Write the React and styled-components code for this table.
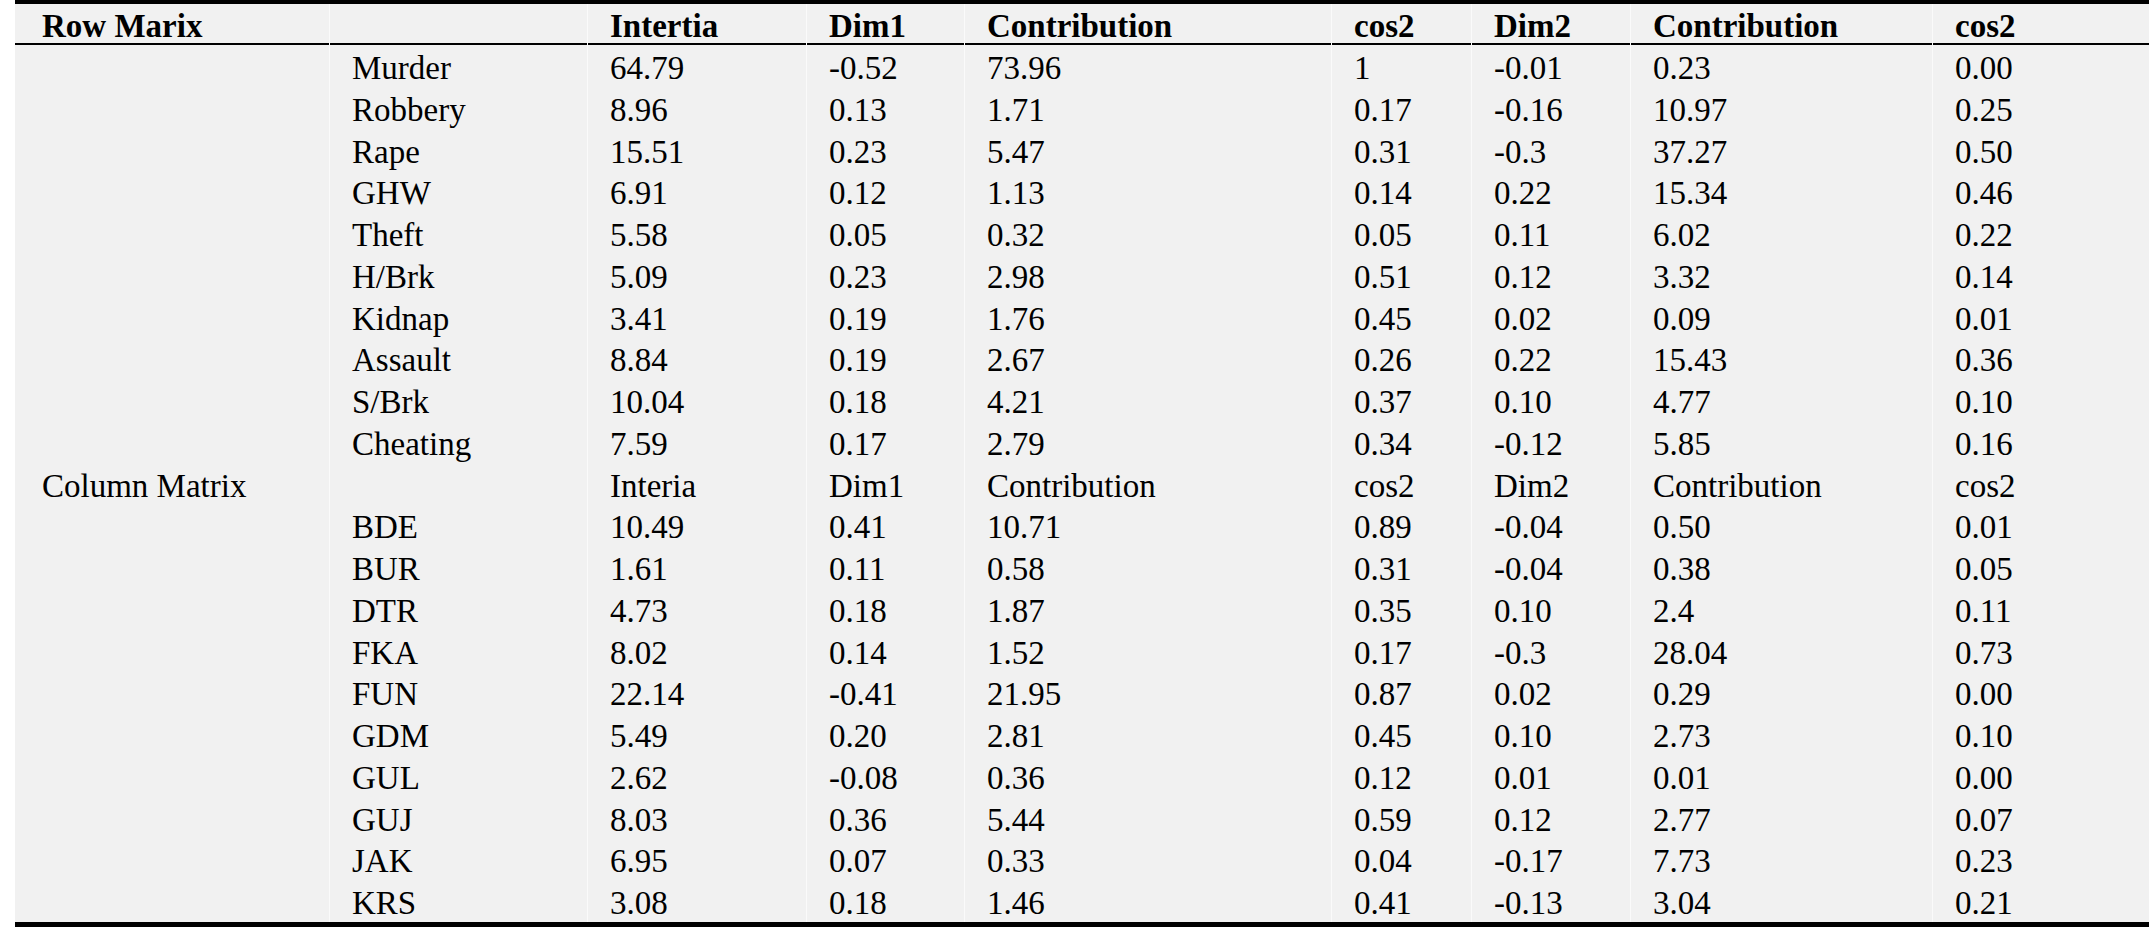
import styled, { createGlobalStyle } from "styled-components";

const GlobalStyle = createGlobalStyle`
  html, body {
    margin: 0;
    padding: 0;
    background: #ffffff;
  }
`;

const COLUMNS = "315px 258px 219px 158px 367px 140px 159px 302px 1fr";

const Table = styled.div`
  margin-left: 15px;
  width: 2134px;
  background: #f1f1f1;
  border-top: 4px solid #000;
  border-bottom: 5px solid #000;
  font-family: "Liberation Serif", "Times New Roman", serif;
  font-size: 33px;
  color: #000;
`;

const Row = styled.div`
  display: grid;
  grid-template-columns: ${COLUMNS};
  height: ${(p) => (p.$head ? "41px" : "41.75px")};
  box-sizing: border-box;
  border-bottom: ${(p) => (p.$head ? "2px solid #000" : "none")};
`;

const Cell = styled.div`
  box-sizing: border-box;
  padding-left: ${(p) => (p.$first ? "27px" : "22px")};
  padding-top: ${(p) => (p.$head ? "2px" : "5px")};
  line-height: ${(p) => (p.$head ? "40px" : "36.75px")};
  font-weight: ${(p) => (p.$bold ? 700 : 400)};
  white-space: nowrap;
  border-right: 1px solid #fafafa;

  &:last-child {
    border-right: none;
  }
`;

const header = ["Row Marix", "", "Intertia", "Dim1", "Contribution", "cos2", "Dim2", "Contribution", "cos2"];

const rowMatrix = [
  ["Murder", "64.79", "-0.52", "73.96", "1", "-0.01", "0.23", "0.00"],
  ["Robbery", "8.96", "0.13", "1.71", "0.17", "-0.16", "10.97", "0.25"],
  ["Rape", "15.51", "0.23", "5.47", "0.31", "-0.3", "37.27", "0.50"],
  ["GHW", "6.91", "0.12", "1.13", "0.14", "0.22", "15.34", "0.46"],
  ["Theft", "5.58", "0.05", "0.32", "0.05", "0.11", "6.02", "0.22"],
  ["H/Brk", "5.09", "0.23", "2.98", "0.51", "0.12", "3.32", "0.14"],
  ["Kidnap", "3.41", "0.19", "1.76", "0.45", "0.02", "0.09", "0.01"],
  ["Assault", "8.84", "0.19", "2.67", "0.26", "0.22", "15.43", "0.36"],
  ["S/Brk", "10.04", "0.18", "4.21", "0.37", "0.10", "4.77", "0.10"],
  ["Cheating", "7.59", "0.17", "2.79", "0.34", "-0.12", "5.85", "0.16"],
];

const columnHeader = ["Column Matrix", "", "Interia", "Dim1", "Contribution", "cos2", "Dim2", "Contribution", "cos2"];

const columnMatrix = [
  ["BDE", "10.49", "0.41", "10.71", "0.89", "-0.04", "0.50", "0.01"],
  ["BUR", "1.61", "0.11", "0.58", "0.31", "-0.04", "0.38", "0.05"],
  ["DTR", "4.73", "0.18", "1.87", "0.35", "0.10", "2.4", "0.11"],
  ["FKA", "8.02", "0.14", "1.52", "0.17", "-0.3", "28.04", "0.73"],
  ["FUN", "22.14", "-0.41", "21.95", "0.87", "0.02", "0.29", "0.00"],
  ["GDM", "5.49", "0.20", "2.81", "0.45", "0.10", "2.73", "0.10"],
  ["GUL", "2.62", "-0.08", "0.36", "0.12", "0.01", "0.01", "0.00"],
  ["GUJ", "8.03", "0.36", "5.44", "0.59", "0.12", "2.77", "0.07"],
  ["JAK", "6.95", "0.07", "0.33", "0.04", "-0.17", "7.73", "0.23"],
  ["KRS", "3.08", "0.18", "1.46", "0.41", "-0.13", "3.04", "0.21"],
];

const BodyRow = ({ cells }) => (
  <Row>
    {cells.map((c, i) => (
      <Cell key={i} $first={i === 0}>
        {c}
      </Cell>
    ))}
  </Row>
);

const App = () => (
  <>
    <GlobalStyle />
    <Table>
      <Row $head>
        {header.map((h, i) => (
          <Cell key={i} $head $bold $first={i === 0}>
            {h}
          </Cell>
        ))}
      </Row>
      {rowMatrix.map((r) => (
        <BodyRow key={r[0]} cells={["", ...r]} />
      ))}
      <BodyRow cells={columnHeader} />
      {columnMatrix.map((r) => (
        <BodyRow key={r[0]} cells={["", ...r]} />
      ))}
    </Table>
  </>
);

export default App;
